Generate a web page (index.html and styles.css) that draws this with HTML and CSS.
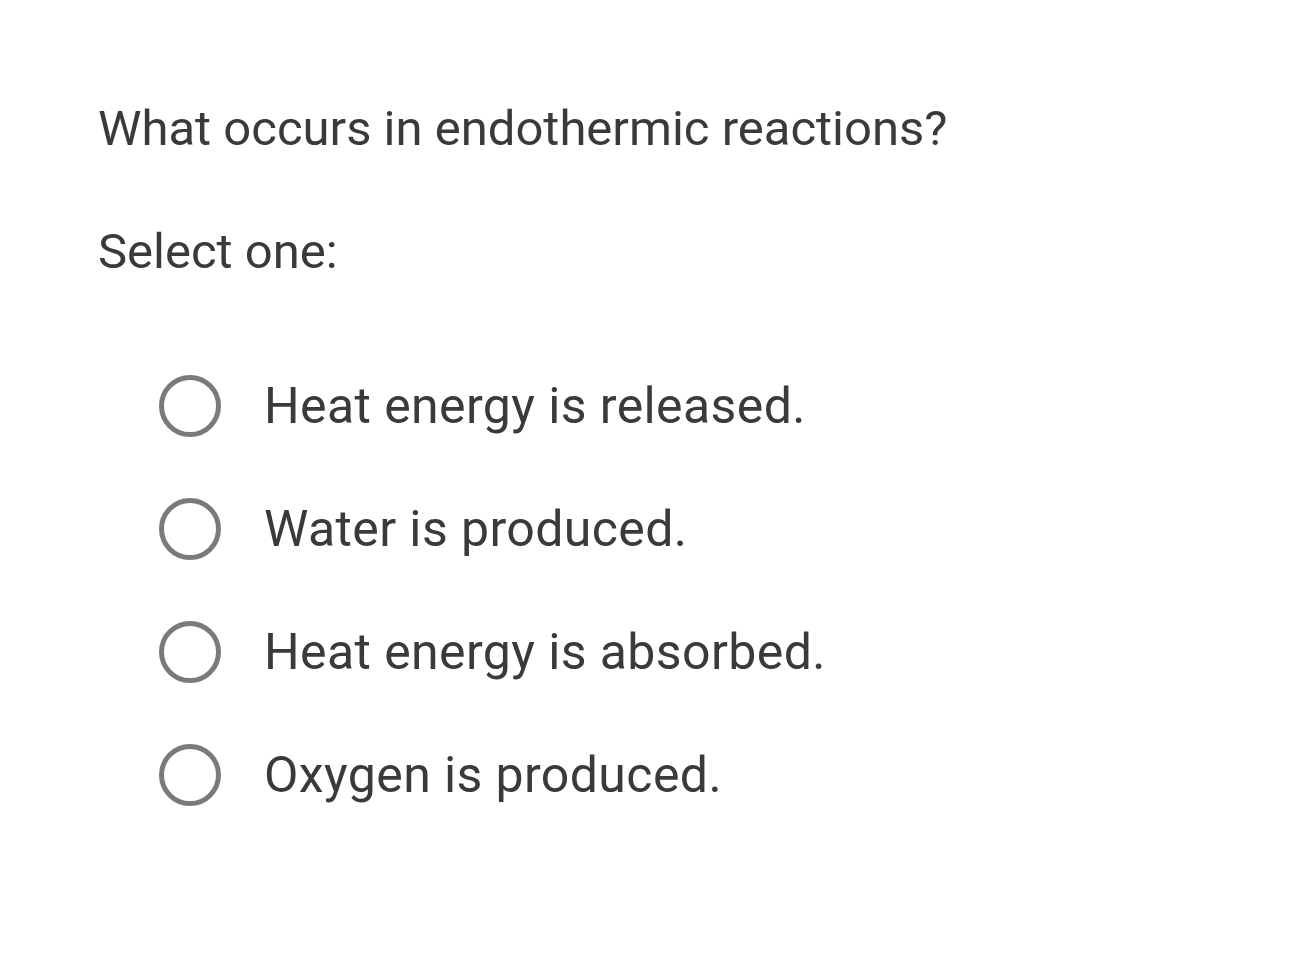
FILE: index.html
```html
<!DOCTYPE html>
<html lang="en">
<head>
<meta charset="utf-8">
<title>Quiz question</title>
<link rel="stylesheet" href="styles.css">
</head>
<body>
<main class="question">
  <p class="prompt">What occurs in endothermic reactions?</p>
  <p class="instruction">Select one:</p>
  <ul class="answers">
    <li class="answer"><span class="radio"></span><span class="label">Heat energy is released.</span></li>
    <li class="answer"><span class="radio"></span><span class="label">Water is produced.</span></li>
    <li class="answer"><span class="radio"></span><span class="label">Heat energy is absorbed.</span></li>
    <li class="answer"><span class="radio"></span><span class="label">Oxygen is produced.</span></li>
  </ul>
</main>
</body>
</html>
```
FILE: styles.css
```css
html, body {
  margin: 0;
  padding: 0;
  background: #ffffff;
}
body {
  font-family: Roboto, "Noto Sans", sans-serif;
  color: #3a3a37;
}
.question {
  padding: 99px 0 0 98px;
}
.prompt, .instruction {
  margin: 0;
  font-size: 49px;
  line-height: 60px;
}
.instruction {
  margin-top: 63px;
}
.answers {
  list-style: none;
  margin: 62px 0 0 0;
  padding: 0 0 0 61px;
}
.answer {
  display: flex;
  align-items: center;
  height: 123px;
}
.radio {
  box-sizing: border-box;
  width: 62px;
  height: 62px;
  border: 5px solid #7a7a7a;
  border-radius: 50%;
  flex: none;
}
.label {
  margin-left: 43px;
  font-size: 50px;
  line-height: 58px;
  letter-spacing: 0.4px;
}
```
